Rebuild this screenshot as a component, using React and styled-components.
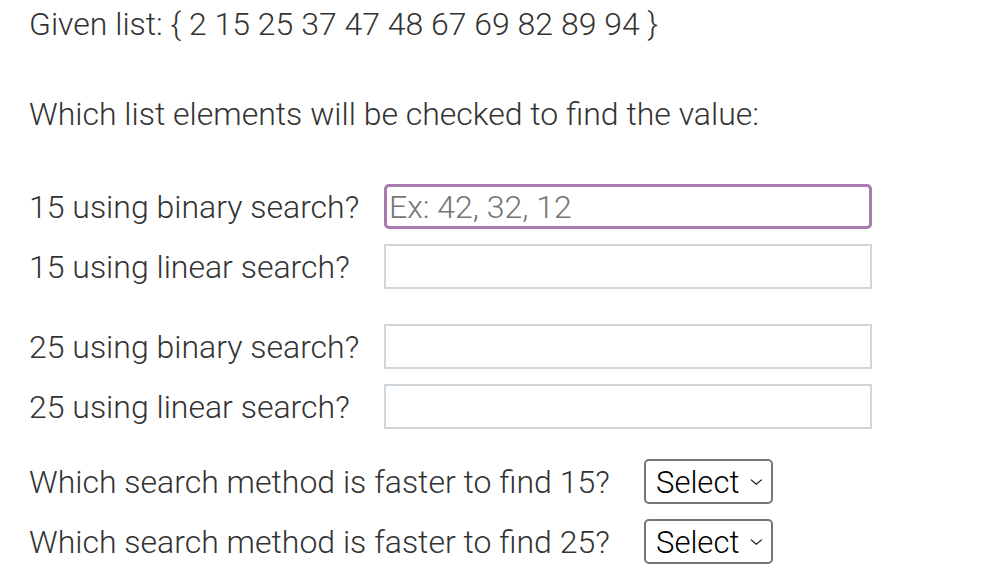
import React from 'react'
import styled, { createGlobalStyle } from 'styled-components'

const GlobalStyle = createGlobalStyle`
  body {
    margin: 0;
    background: white;
    font-family: Roboto, "Liberation Sans", sans-serif;
    font-weight: 300;
    color: #333;
  }
`

const Page = styled.div`
  padding: 0 0 0 29px;
  font-size: 32px;
`

const Text = styled.p`
  margin: 0;
  line-height: 40px;
  padding-top: ${({ $top }) => $top}px;
`

const Group = styled.div`
  display: flex;
  flex-direction: column;
  gap: 15px;
  margin-top: ${({ $top }) => $top}px;
`

const Row = styled.label`
  display: flex;
  align-items: center;
  height: 45px;
`

const Label = styled.span`
  width: ${({ $w }) => $w}px;
  flex-shrink: 0;
`

const Field = styled.input`
  box-sizing: border-box;
  width: 488px;
  height: 45px;
  margin: 0;
  padding: 0 2px;
  font-family: Roboto, "Liberation Sans", sans-serif;
  font-weight: 300;
  font-size: 32px;
  color: #333;
  background: white;
  border-style: solid;
  border-color: ${({ $focused }) => ($focused ? '#a97aaf' : '#d0d7dc')};
  border-width: ${({ $focused }) => ($focused ? 3 : 2)}px;
  border-radius: ${({ $focused }) => ($focused ? 5 : 0)}px;
  outline: none;

  &::placeholder {
    color: #757575;
  }
`

const SelectBox = styled.div`
  box-sizing: border-box;
  display: flex;
  align-items: center;
  gap: 11px;
  width: 129px;
  height: 45px;
  padding: 1px 8px 0 10px;
  border: 2px solid #767676;
  border-radius: 5px;
  font-family: Roboto, "Liberation Sans", sans-serif;
  font-weight: 300;
  font-size: 31px;
  color: #000;
`

const Chevron = () => (
  <svg width="15" height="8" viewBox="0 0 15 8" fill="none">
    <path d="M1 1.2 L7.5 6.6 L14 1.2" stroke="#111" strokeWidth="1.4" />
  </svg>
)

const searchGroups = [
  ['15 using binary search?', '15 using linear search?'],
  ['25 using binary search?', '25 using linear search?']
]

export default function App() {
  return (
    <Page>
      <GlobalStyle />
      <Text $top={4}>Given list: {'{'} 2 15 25 37 47 48 67 69 82 89 94 {'}'}</Text>
      <Text $top={50}>Which list elements will be checked to find the value:</Text>
      {searchGroups.map((group, gi) => (
        <Group key={gi} $top={gi === 0 ? 50 : 35}>
          {group.map((q, qi) => (
            <Row key={q}>
              <Label $w={355}>{q}</Label>
              <Field
                $focused={gi === 0 && qi === 0}
                placeholder={gi === 0 && qi === 0 ? 'Ex: 42, 32, 12' : ''}
              />
            </Row>
          ))}
        </Group>
      ))}
      <Group $top={30}>
        {[15, 25].map((n) => (
          <Row key={n}>
            <Label $w={615}>Which search method is faster to find {n}?</Label>
            <SelectBox>
              Select
              <Chevron />
            </SelectBox>
          </Row>
        ))}
      </Group>
    </Page>
  )
}
